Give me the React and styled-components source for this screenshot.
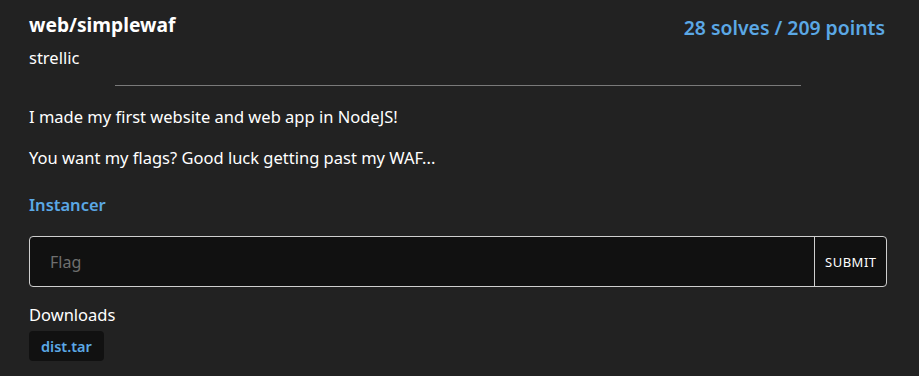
import React from 'react';
import styled, { createGlobalStyle } from 'styled-components';

const Global = createGlobalStyle`
  html, body {
    margin: 0;
    background: #222222;
    color: #ffffff;
    font-family: "Noto Sans", "Open Sans", sans-serif;
  }
`;

const Card = styled.div`
  padding: 13px 32px 16px 29px;
`;

const Header = styled.div`
  display: flex;
  justify-content: space-between;
  align-items: flex-start;
`;

const Title = styled.h1`
  margin: 0;
  font-size: 19.2px;
  font-weight: 700;
  line-height: 24px;
`;

const Author = styled.div`
  font-size: 16.5px;
  line-height: 22px;
  margin-top: 10px;
`;

const Points = styled.div`
  color: #5ba8e5;
  font-size: 19.4px;
  font-weight: 600;
  line-height: 24px;
  margin-top: 3px;
  margin-right: 2px;
`;

const Rule = styled.hr`
  width: 80%;
  margin: 16px auto 20px;
  border: 0;
  border-top: 1px solid #7a7a7a;
`;

const Para = styled.p`
  margin: 0 0 19px;
  font-size: 16.5px;
  line-height: 22px;
`;

const Link = styled.a`
  display: block;
  color: #5ba8e5;
  font-weight: 600;
  font-size: 16.5px;
  line-height: 22px;
  text-decoration: none;
  margin-top: 25px;
`;

const Form = styled.form`
  display: flex;
  margin-top: 20px;
  height: 51px;
  border: 1px solid #cfcfcf;
  border-radius: 4px;
  background: #111111;
  box-sizing: border-box;
  overflow: hidden;
`;

const Input = styled.input`
  flex: 1;
  background: transparent;
  border: 0;
  outline: none;
  padding: 0 20px;
  color: #ffffff;
  font-family: inherit;
  font-size: 16px;
  &::placeholder { color: #6f6f6f; }
`;

const Submit = styled.button`
  background: transparent;
  border: 0;
  border-left: 1px solid #cfcfcf;
  color: #ffffff;
  font-family: inherit;
  font-size: 13px;
  letter-spacing: 0.5px;
  padding: 0 10px;
  width: 72px;
`;

const Label = styled.div`
  font-size: 16.5px;
  line-height: 22px;
  margin-top: 17px;
`;

const Chip = styled.a`
  display: inline-block;
  margin-top: 5px;
  padding: 4px 12px;
  background: #111111;
  border-radius: 4px;
  color: #5ba8e5;
  font-weight: 600;
  font-size: 14.5px;
  line-height: 22px;
  text-decoration: none;
`;

export default function App() {
  return (
    <>
      <Global />
      <Card>
        <Header>
          <div>
            <Title>web/simplewaf</Title>
            <Author>strellic</Author>
          </div>
          <Points>28 solves / 209 points</Points>
        </Header>
        <Rule />
        <Para>I made my first website and web app in NodeJS!</Para>
        <Para>You want my flags? Good luck getting past my WAF...</Para>
        <Link href="#">Instancer</Link>
        <Form onSubmit={e => e.preventDefault()}>
          <Input placeholder="Flag" />
          <Submit type="submit">SUBMIT</Submit>
        </Form>
        <Label>Downloads</Label>
        <Chip href="#">dist.tar</Chip>
      </Card>
    </>
  );
}
